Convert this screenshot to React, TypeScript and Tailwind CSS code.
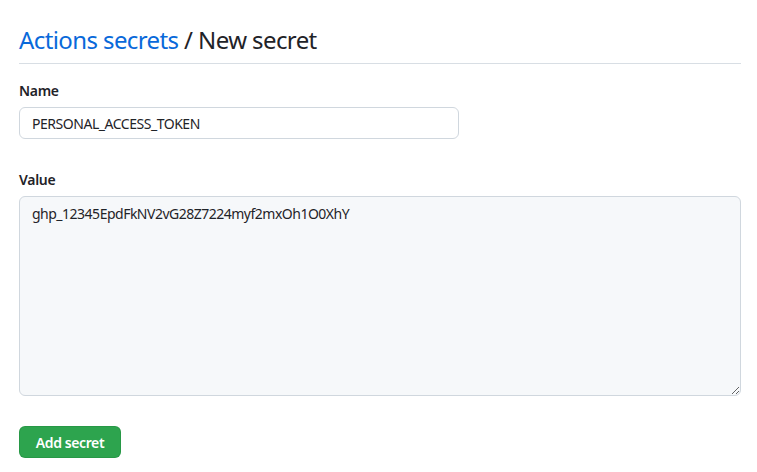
export default function App() {
  return (
    <div
      className="w-[757px] h-[472px] bg-white pl-[19px] pr-[16px] pt-[23px] text-[#1f2328]"
      style={{ fontFamily: '"Noto Sans", "Open Sans", sans-serif' }}
    >
      <div className="border-b border-[#d8dee4] pb-[7px]">
        <h1 className="text-[24px] leading-[33px] font-normal tracking-[-0.6px]">
          <a className="text-[#0969da]">Actions secrets</a>
          <span> / New secret</span>
        </h1>
      </div>
      <div className="mt-[17px]">
        <label className="block text-[14px] leading-[20px] font-semibold tracking-[-0.3px]">Name</label>
        <div className="mt-[6px] w-[440px] h-[32px] border border-[#d0d7de] rounded-[6px] px-[12px] flex items-center text-[14px] tracking-[-0.47px]">
          PERSONAL_ACCESS_TOKEN
        </div>
      </div>
      <div className="mt-[31px]">
        <label className="block text-[14px] leading-[20px] font-semibold tracking-[-0.3px]">Value</label>
        <textarea
          readOnly
          className="mt-[6px] block w-full h-[200px] bg-[#f6f8fa] border border-[#d0d7de] rounded-[6px] px-[12px] py-[7px] text-[14px] leading-[20px] tracking-[-0.5px] resize-y outline-none"
          style={{ fontFamily: '"Noto Sans", "Open Sans", sans-serif' }}
          defaultValue="ghp_12345EpdFkNV2vG28Z7224myf2mxOh1O0XhY"
        />
      </div>
      <button className="mt-[30px] h-[32px] w-[102px] rounded-[6px] bg-[#2da44e] border border-[#1f883d]/40 text-white text-[14px] font-semibold tracking-[-0.4px]">
        Add secret
      </button>
    </div>
  );
}
